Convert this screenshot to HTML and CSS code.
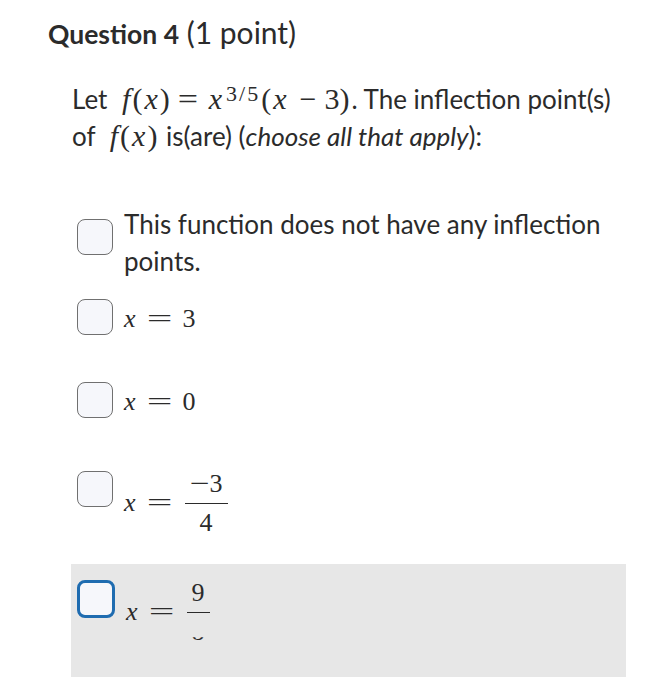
FILE: index.html
```html
<!DOCTYPE html>
<html lang="en">
<head>
    <meta charset="UTF-8">
    <title>Question 4</title>
    <link rel="stylesheet" href="styles.css">
</head>
<body>
<div class="question">
    <h2 class="title"><span class="qnum">Question 4</span> (1 point)</h2>

    <p class="stem">
        Let <span class="m"><i>f</i>(<i>x</i>)<span class="op">=</span><i>x</i><sup>3/5</sup>(<i>x</i><span class="op minus">−</span>3)</span>. The inflection point(s)
        of <span class="m"><i>f</i>(<i>x</i>)</span> is(are) (<em>choose all that apply</em>):
    </p>

    <!-- answer choices -->
    <ul class="choices">
        <li class="choice first">
            <span class="box"></span>
            <span class="label text">This function does not have any inflection points.</span>
        </li>
        <li class="choice">
            <span class="box"></span>
            <span class="label m"><i>x</i><span class="op">=</span>3</span>
        </li>
        <li class="choice">
            <span class="box"></span>
            <span class="label m"><i>x</i><span class="op">=</span>0</span>
        </li>
        <li class="choice frac-row tall">
            <span class="box"></span>
            <span class="label m"><i>x</i><span class="op">=</span><span class="frac"><span class="num"><span class="neg">−</span>3</span><span class="den">4</span></span></span>
        </li>
        <li class="choice frac-row hover">
            <span class="box focus"></span>
            <span class="label m"><i>x</i><span class="op">=</span><span class="frac"><span class="num">9</span><span class="den clipped">8</span></span></span>
        </li>
    </ul>
</div>
</body>
</html>
```

FILE: styles.css
```css
body {
    margin: 0;
    background: #fff;
    color: #2b2b2b;
    font-family: Lato, "Open Sans", sans-serif;
}
.question {
    padding: 14px 0 0 48px;
    width: 578px;
}
.title {
    margin: 0;
    font-size: 30px;
    font-weight: normal;
    line-height: 36px;
}
.qnum {
    font-size: 26.5px;
    font-weight: bold;
}
.stem {
    margin: 29px 0 0 24px;
    font-size: 26px;
    line-height: 37px;
}
.stem em {
    font-style: italic;
}
.m {
    font-family: "Liberation Serif", "DejaVu Serif", serif;
    font-size: 30px;
}
.stem .m {
    line-height: 30px;
    margin: 0 2px 0 6px;
}
.stem .m i {
    margin: 0 2px;
}
.m i {
    font-style: italic;
}
.m .op {
    display: inline-block;
    width: 18px;
    margin: 0 10px 0 9px;
    text-align: center;
    transform: scaleX(1.2);
}
.m .op.minus {
    width: 14px;
    margin: 0 11px;
    transform: none;
}
.m sup {
    font-size: 22px;
    line-height: 0;
    letter-spacing: 2px;
    vertical-align: 8px;
    margin: 0 1px 0 2px;
}
.choices {
    list-style: none;
    margin: 48px 0 0 23px;
    padding: 0;
}
.choice {
    display: flex;
    align-items: flex-start;
    gap: 11px;
    padding: 16px 6px;
    margin-bottom: 15px;
}
.choice.first {
    margin-bottom: 12px;
}
.box {
    flex: none;
    width: 34px;
    height: 34px;
    border: 1.5px solid #707070;
    border-radius: 8px;
    background: #f6f7fb;
}
.box.focus {
    border: 3px solid #1f6cb0;
    width: 32px;
    height: 32px;
}
.label {
    font-size: 26px;
    line-height: 37px;
}
.label.text {
    margin: -12.6px 0 -25.6px;
}
.label.m {
    font-size: 26px;
    margin: 1px 0 -3px;
}
.label.m .op {
    width: 23px;
    margin: 0 12px 0 12px;
    transform: scaleX(1.75);
}
.frac {
    display: inline-flex;
    flex-direction: column;
    align-items: center;
    vertical-align: 19px;
    margin-left: 2px;
    line-height: 26px;
}
.frac .num {
    padding: 0 5px 6px;
    border-bottom: 1.5px solid #2b2b2b;
    align-self: stretch;
    text-align: center;
}
.frac .neg {
    display: inline-block;
    width: 20px;
    text-align: center;
    transform: scaleX(1.35);
}
.frac .den {
    padding-top: 6px;
}
.frac .den.clipped {
    clip-path: inset(76% 0 0 0);
}
.frac-row {
    margin-bottom: 17px;
}
.frac-row.tall {
    padding-top: 22px;
    margin-bottom: 15px;
}
.frac-row .label.m {
    margin-top: 0;
}
.choice.hover {
    background: #e7e7e7;
    padding-bottom: 35px;
}
```
